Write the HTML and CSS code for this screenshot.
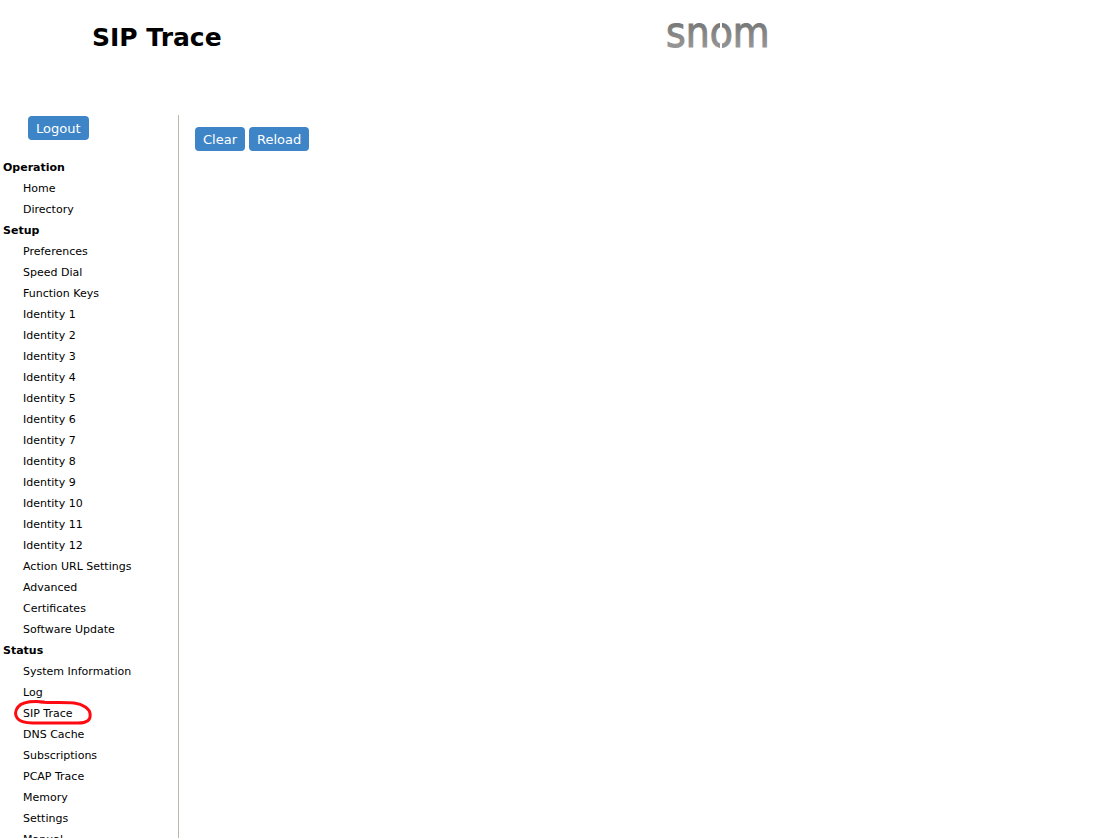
FILE: index.html
```html
<!DOCTYPE html>
<html lang="en">
<head>
    <meta charset="UTF-8">
    <meta name="viewport" content="width=device-width, initial-scale=1.0">
    <title>SIP Trace</title>
    <link rel="stylesheet" href="styles.css">
</head>
<body>
    <header class="header">
        <h1 class="title">SIP Trace</h1>
        <svg class="logo" width="108" height="28" viewBox="0 0 108 28" role="img" aria-label="snom">
            <defs>
                <linearGradient id="logo-fill" x1="0" y1="0" x2="0" y2="28" gradientUnits="userSpaceOnUse">
                    <stop offset="0" stop-color="#777"/>
                    <stop offset="1" stop-color="#999"/>
                </linearGradient>
            </defs>
            <text class="logo-text" x="0" y="25" fill="url(#logo-fill)" stroke="url(#logo-fill)">snom</text>
            <!-- split in the o -->
            <path d="M55 0v28" stroke="#fff" stroke-width="2"/>
        </svg>
    </header>

    <div class="page">
        <nav class="sidebar">
            <button class="button logout" type="button">Logout</button>

            <h2 class="menu-title">Operation</h2>
            <ul class="menu">
                <li><a href="#">Home</a></li>
                <li><a href="#">Directory</a></li>
            </ul>

            <h2 class="menu-title">Setup</h2>
            <ul class="menu">
                <li><a href="#">Preferences</a></li>
                <li><a href="#">Speed Dial</a></li>
                <li><a href="#">Function Keys</a></li>
                <li><a href="#">Identity 1</a></li>
                <li><a href="#">Identity 2</a></li>
                <li><a href="#">Identity 3</a></li>
                <li><a href="#">Identity 4</a></li>
                <li><a href="#">Identity 5</a></li>
                <li><a href="#">Identity 6</a></li>
                <li><a href="#">Identity 7</a></li>
                <li><a href="#">Identity 8</a></li>
                <li><a href="#">Identity 9</a></li>
                <li><a href="#">Identity 10</a></li>
                <li><a href="#">Identity 11</a></li>
                <li><a href="#">Identity 12</a></li>
                <li><a href="#">Action URL Settings</a></li>
                <li><a href="#">Advanced</a></li>
                <li><a href="#">Certificates</a></li>
                <li><a href="#">Software Update</a></li>
            </ul>

            <h2 class="menu-title">Status</h2>
            <ul class="menu">
                <li><a href="#">System Information</a></li>
                <li><a href="#">Log</a></li>
                <li class="current">
                    <a href="#">SIP Trace</a>
                    <svg class="marker" width="80" height="28" viewBox="0 0 80 28" aria-hidden="true">
                        <path d="M31 3C20 2 9 3 5 8C1 13 2 19 8 22C13 25 24 24 39 24L65 24C74 24 78 21 77 15C77 10 70 5 61 4C52 3 40 4 27 3"/>
                    </svg>
                </li>
                <li><a href="#">DNS Cache</a></li>
                <li><a href="#">Subscriptions</a></li>
                <li><a href="#">PCAP Trace</a></li>
                <li><a href="#">Memory</a></li>
                <li><a href="#">Settings</a></li>
                <li><a href="#">Manual</a></li>
            </ul>
        </nav>

        <main class="content">
            <button class="button" type="button">Clear</button>
            <button class="button" type="button">Reload</button>
        </main>
    </div>
</body>
</html>
```
FILE: styles.css
```css
body {
    margin: 0;
    background: #fff;
    color: #000;
    font-family: Verdana, "DejaVu Sans", sans-serif;
    font-size: 11px;
}

.header {
    display: flex;
    align-items: flex-start;
    height: 115px;
    box-sizing: border-box;
    padding: 22px 0 0 92px;
}

.title {
    width: 574px;
    margin: 0;
    font-size: 25px;
    line-height: 32px;
}

.logo {
    overflow: visible;
}

.logo-text {
    font-family: "DejaVu Sans Condensed", "DejaVu Sans", sans-serif;
    font-size: 42px;
    stroke-width: 1;
}

.page {
    display: flex;
}

.sidebar {
    width: 178px;
    flex-shrink: 0;
    border-right: 1px solid #b9b9a8;
}

.button {
    height: 24px;
    padding: 0 8px;
    border: none;
    border-radius: 4px;
    background: #3d85c6;
    color: #fff;
    font-family: inherit;
    font-size: 13px;
    cursor: pointer;
}

.logout {
    display: block;
    margin: 1px 0 17px 28px;
}

.menu-title {
    margin: 0;
    padding-left: 3px;
    font-size: 11px;
    line-height: 21px;
}

.menu {
    margin: 0;
    padding: 0 0 0 23px;
    list-style: none;
    line-height: 21px;
}

.menu a {
    color: #000;
    text-decoration: none;
}

.current {
    position: relative;
}

.marker {
    position: absolute;
    left: -10px;
    top: -4px;
    fill: none;
    stroke: #ff0a10;
    stroke-width: 3;
    stroke-linecap: round;
    pointer-events: none;
}

.content {
    display: flex;
    align-items: flex-start;
    gap: 4px;
    padding: 12px 16px;
}
```
